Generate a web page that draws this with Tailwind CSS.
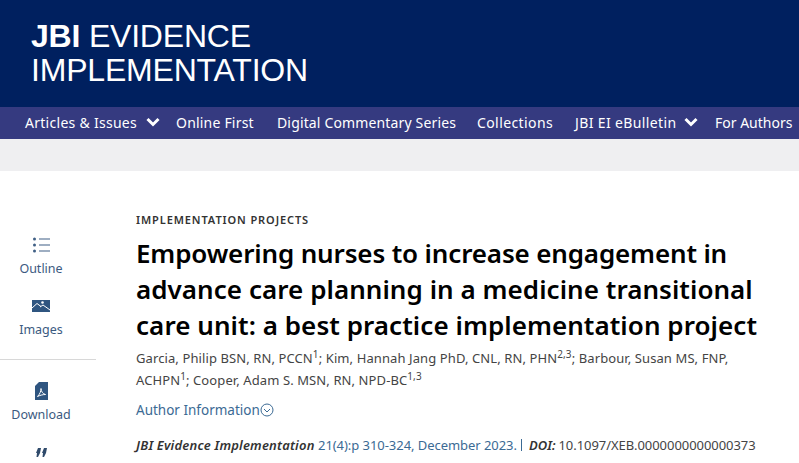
<!doctype html>
<html><head><meta charset="utf-8"><script src="https://cdn.jsdelivr.net/npm/@tailwindcss/browser@4"></script></head>
<body class="bg-white overflow-hidden font-['Noto_Sans',sans-serif] h-[463px] w-[799px]">
<header class="h-[107px] bg-[#00205f] pl-[31px] pt-[19px] font-['Liberation_Sans',sans-serif] text-white text-[32px] leading-[34px] tracking-[-0.2px]">
  <div><b class="font-bold">JBI</b> EVIDENCE</div><div>IMPLEMENTATION</div>
</header>
<nav class="h-[32px] bg-[#353a80] flex items-center pl-[25px] pb-[2px] text-white text-[14px] whitespace-nowrap">
  <span class="w-[112px] tracking-[0.28px]">Articles &amp; Issues</span>
  <svg class="ml-[9px] w-[14px] h-[10px]" viewBox="0 0 14 10" fill="none" stroke="white" stroke-width="3"><path d="M1.500 2 7 7.500 12.500 2"/></svg>
  <span class="ml-[16px] w-[79px] tracking-[0.2px]">Online First</span>
  <span class="ml-[22px] w-[179px] tracking-[0.15px]">Digital Commentary Series</span>
  <span class="ml-[21px] w-[76px] tracking-[0.4px]">Collections</span>
  <span class="ml-[22px] w-[101px] tracking-[0.37px]">JBI EI eBulletin</span>
  <svg class="ml-[8px] w-[14px] h-[10px]" viewBox="0 0 14 10" fill="none" stroke="white" stroke-width="3"><path d="M1.500 2 7 7.500 12.500 2"/></svg>
  <span class="ml-[17px]">For Authors</span>
</nav>
<div class="h-[32px] bg-[#efeff1]"></div>
<div class="flex">
  <aside class="w-[96px] shrink-0 pt-[66px] text-[#3b5a7f] text-[12.500px] flex flex-col items-start">
    <div class="w-[82px] flex flex-col items-center">
      <svg class="w-[17px] h-[16px]" viewBox="0 0 17 16" fill="#3f5f85"><circle cx="1.500" cy="2" r="1.500"/><circle cx="1.500" cy="8" r="1.500"/><circle cx="1.500" cy="14" r="1.500"/><path d="M6 1.500h11v1H6zM6 7.500h11v1H6zM6 13.500h11v1H6z"/></svg>
      <span class="mt-[7px] leading-[18px]">Outline</span>
      <svg class="mt-[22px] w-[18px] h-[12px]" viewBox="0 0 18 12"><rect width="18" height="12" fill="#2f5580"/><path d="M0 8 5 3.500 9 6.500M8 7l3-2 7 5" fill="none" stroke="white" stroke-width="1"/><circle cx="10.500" cy="2.500" r="1.300" fill="white"/></svg>
      <span class="mt-[9px] leading-[18px]">Images</span>
    </div>
    <div class="w-full h-px bg-[#d8d8d8] mt-[20px]"></div>
    <div class="w-[82px] flex flex-col items-center">
      <svg class="mt-[22px] w-[13px] h-[18px]" viewBox="0 0 13 18"><path d="M4 0h9v18H0V4z" fill="#2f5580"/><path d="M2.500 14.500C5 12 6 9 6 6.500c0 3 2 5.500 4.500 6-3 0-6 1-8 2z" fill="none" stroke="white" stroke-width="1"/></svg>
      <span class="mt-[6px] leading-[18px]">Download</span>
      <svg class="mt-[24px] w-[11px] h-[9px]" viewBox="0 0 11 9" fill="#2f4a6b"><path d="M2 0h3L4 5 2 9H.500L1 5H0zM8 0h3l-1 5-2 4H6.500L7 5H6z"/></svg>
    </div>
  </aside>
  <main class="ml-[40px] flex-1 pt-[41px]">
    <div class="text-[11px] font-semibold tracking-[0.9px] leading-[16px] text-[#333]">IMPLEMENTATION PROJECTS</div>
    <h1 class="mt-[7px] text-[26px] leading-[36px] font-semibold text-black whitespace-nowrap">
      <span class="block tracking-[-0.15px]">Empowering nurses to increase engagement in</span>
      <span class="block tracking-[0.05px]">advance care planning in a medicine transitional</span>
      <span class="block tracking-[0.06px]">care unit: a best practice implementation project</span>
    </h1>
    <p class="mt-[4px] text-[13px] leading-[22px] text-[#444] w-[610px] tracking-[0.1px]">Garcia, Philip BSN, RN, PCCN<sup class="text-[10px]">1</sup>; Kim, Hannah Jang PhD, CNL, RN, PHN<sup class="text-[10px]">2,3</sup>; Barbour, Susan MS, FNP, ACHPN<sup class="text-[10px]">1</sup>; Cooper, Adam S. MSN, RN, NPD-BC<sup class="text-[10px]">1,3</sup></p>
    <div class="mt-[9px] flex items-center text-[13.500px] leading-[20px] text-[#3b6a94]"><span class="w-[123px] whitespace-nowrap">Author Information</span><svg class="ml-[1px] w-[14px] h-[14px]" viewBox="0 0 14 14" fill="none" stroke="#3b6a94"><circle cx="7" cy="7" r="6"/><path d="M4 6l3 3 3-3"/></svg></div>
    <div class="mt-[15px] flex items-center text-[13px] leading-[20px] whitespace-nowrap">
      <i class="font-semibold text-[#333] w-[178px] tracking-[0.2px]">JBI Evidence Implementation</i>
      <span class="ml-[4px] w-[197px] text-[#3b6a94] tracking-[-0.05px]">21(4):p 310-324, December 2023.</span>
      <span class="ml-[6px] w-px h-[12px] bg-[#3b6a94]"></span>
      <i class="ml-[7px] font-semibold text-[#333]">DOI:</i>
      <span class="ml-[3px] text-[#444] tracking-[-0.05px]">10.1097/XEB.0000000000000373</span>
    </div>
  </main>
</div>
</body></html>
